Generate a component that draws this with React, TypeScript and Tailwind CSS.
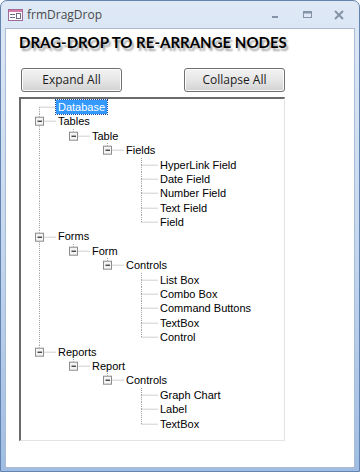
import React from "react";

type TreeNode = { label: string; selected?: boolean; children?: TreeNode[] };

const tree: TreeNode[] = [
  { label: "Database", selected: true },
  {
    label: "Tables",
    children: [
      {
        label: "Table",
        children: [
          {
            label: "Fields",
            children: [
              { label: "HyperLink Field" },
              { label: "Date Field" },
              { label: "Number Field" },
              { label: "Text Field" },
              { label: "Field" },
            ],
          },
        ],
      },
    ],
  },
  {
    label: "Forms",
    children: [
      {
        label: "Form",
        children: [
          {
            label: "Controls",
            children: [
              { label: "List Box" },
              { label: "Combo Box" },
              { label: "Command Buttons" },
              { label: "TextBox" },
              { label: "Control" },
            ],
          },
        ],
      },
    ],
  },
  {
    label: "Reports",
    children: [
      {
        label: "Report",
        children: [
          {
            label: "Controls",
            children: [{ label: "Graph Chart" }, { label: "Label" }, { label: "TextBox" }],
          },
        ],
      },
    ],
  },
];

type Row = {
  node: TreeNode;
  guides: boolean[];
  top: boolean;
  last: boolean;
};

function flatten(nodes: TreeNode[], guides: boolean[], rows: Row[]) {
  nodes.forEach((node, i) => {
    const last = i === nodes.length - 1;
    rows.push({ node, guides, top: !(guides.length === 0 && i === 0), last });
    if (node.children) flatten(node.children, [...guides, !last], rows);
  });
  return rows;
}

const W = 34;
const H = 14.4;
const C = 17.5;
const M = H / 2;
const LINE = "#a0a0a0";

function Guide({ on }: { on: boolean }) {
  return (
    <svg width={W} height={H} className="shrink-0">
      {on && <line x1={C} y1={0} x2={C} y2={H} stroke={LINE} strokeDasharray="1 1" />}
    </svg>
  );
}

function Connector({ row }: { row: Row }) {
  const open = !!row.node.children;
  return (
    <svg width={W} height={H} className="shrink-0">
      {row.top && <line x1={C} y1={0} x2={C} y2={open ? M - 4.5 : M} stroke={LINE} strokeDasharray="1 1" />}
      {!row.last && <line x1={C} y1={open ? M + 4.5 : M} x2={C} y2={H} stroke={LINE} strokeDasharray="1 1" />}
      <line x1={open ? C + 5 : C} y1={M} x2={W} y2={M} stroke={LINE} strokeDasharray="1 1" />
      {open && (
        <g>
          <rect x={13.5} y={M - 4} width={8} height={8} fill="#f4f4f4" stroke="#8c8c8c" />
          <line x1={15.5} y1={M} x2={20} y2={M} stroke="#000" />
        </g>
      )}
    </svg>
  );
}

function FormIcon() {
  return (
    <svg width="15" height="12" viewBox="0 0 15 12">
      <rect x="0.5" y="0.5" width="14" height="11" fill="#fff" stroke="#9c6b9a" />
      <rect x="1" y="1" width="13" height="2" fill="#d77aa8" />
      <line x1="2" y1="5.5" x2="7" y2="5.5" stroke="#6d6d8a" />
      <line x1="2" y1="8.5" x2="7" y2="8.5" stroke="#6d6d8a" />
      <rect x="8.5" y="4.5" width="4" height="5" fill="none" stroke="#6d6d8a" />
    </svg>
  );
}

function WinButton({ label }: { label: string }) {
  return (
    <button className="h-[24px] w-[101px] rounded-[3px] border border-[#707070] bg-gradient-to-b from-[#f3f3f3] via-[#e6e6e6] to-[#d2d2d2] text-[12px] text-[#1b1b1b] shadow-[inset_0_0_0_1px_#fcfcfc] [font-family:'Open_Sans',sans-serif]">
      {label}
    </button>
  );
}

export default function App() {
  const rows = flatten(tree, [], []);

  return (
    <div className="flex h-[472px] w-[360px] flex-col rounded-t-[7px] border border-[#6384b0] bg-gradient-to-b from-[#dfe9f6] via-[#c6d8ef] to-[#9fbde3] px-[4px] pb-[3px]">
      <div className="flex h-[27px] shrink-0 items-center gap-[4px] pl-[3px]">
        <FormIcon />
        <span className="text-[12px] text-[#4a4a4a] [font-family:'Open_Sans',sans-serif]">frmDragDrop</span>
        <div className="ml-auto flex items-center gap-[16px] pr-[8px]">
          <svg width="16" height="10" viewBox="0 0 16 10">
            <rect x="5" y="6" width="6" height="2" fill="#8593a8" />
          </svg>
          <svg width="16" height="10" viewBox="0 0 16 10">
            <rect x="4.5" y="1.5" width="8" height="6" fill="none" stroke="#8593a8" />
            <rect x="4.5" y="1.5" width="8" height="2" fill="#8593a8" />
          </svg>
          <svg width="16" height="10" viewBox="0 0 16 10">
            <path d="M4 1 L12 9 M12 1 L4 9" stroke="#8593a8" strokeWidth="2" />
          </svg>
        </div>
      </div>

      <div className="flex flex-1 flex-col border border-[#a9bcd4] bg-white">
        <h1 className="mt-[3px] ml-[13px] text-[15px] font-bold leading-[20px] text-black [font-family:Lato,sans-serif] [text-shadow:2px_3px_2px_rgba(0,0,0,0.35)]">
          DRAG-DROP TO RE-ARRANGE NODES
        </h1>

        <div className="mt-[16px] ml-[15px] flex w-[264px] justify-between">
          <WinButton label="Expand All" />
          <WinButton label="Collapse All" />
        </div>

        <div className="mt-[5px] ml-[13px] h-[344px] w-[266px] border-t-2 border-l-2 border-r border-b border-t-[#6b6b6b] border-l-[#6b6b6b] border-r-[#e3e3e3] border-b-[#e3e3e3] bg-white pt-[1px] pl-[1px] text-[11px] text-black [font-family:'Liberation_Sans',Arial,sans-serif]">
          {rows.map((row, i) => (
            <div key={i} className="flex h-[14.4px] items-center">
              {row.guides.map((g, j) => (
                <Guide key={j} on={g} />
              ))}
              <Connector row={row} />
              <span
                className={
                  row.node.selected
                    ? "flex h-[14px] items-center bg-[#3399ff] px-[2px] text-white outline-1 outline-dotted outline-[#1a4d99]"
                    : "flex h-[14px] items-center px-[2px]"
                }
              >
                {row.node.label}
              </span>
            </div>
          ))}
        </div>
      </div>
    </div>
  );
}
